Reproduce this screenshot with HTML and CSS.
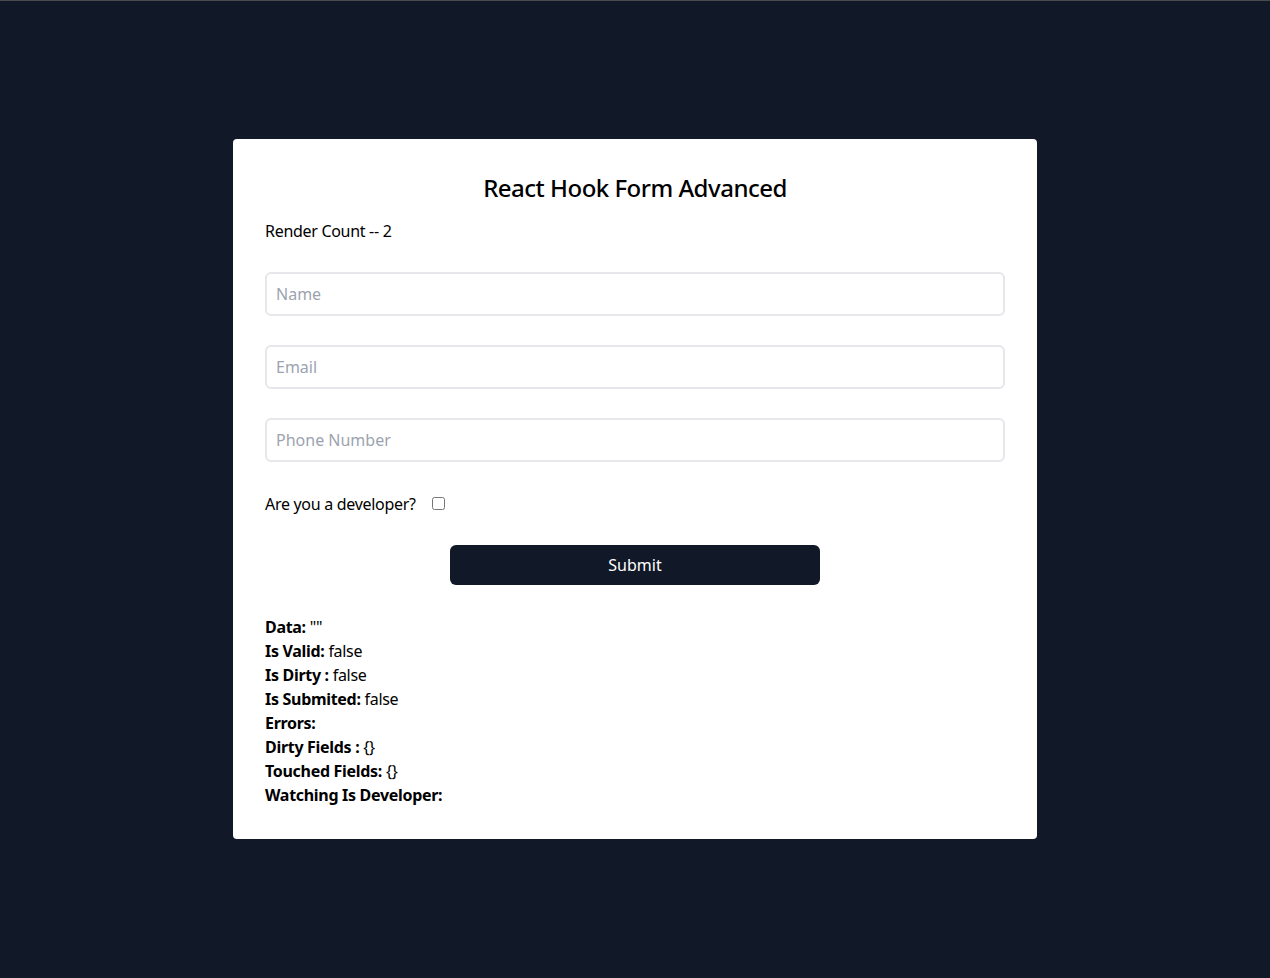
FILE: index.html
```html
<!DOCTYPE html>
<html lang="en">
<head>
<meta charset="utf-8">
<title>React Hook Form Advanced</title>
<link rel="stylesheet" href="styles.css">
</head>
<body>
<div class="topline"></div>
<main class="page">
  <section class="card">
    <h1 class="title">React Hook Form Advanced</h1>
    <p class="render">Render Count -- 2</p>
    <form class="form">
      <input class="field" type="text" placeholder="Name">
      <input class="field" type="text" placeholder="Email">
      <input class="field" type="text" placeholder="Phone Number">
      <label class="check-row">Are you a developer? <input class="check" type="checkbox"></label>
      <div class="btn-row"><button class="submit" type="button">Submit</button></div>
    </form>
    <div class="info">
      <div><b>Data:</b> ""</div>
      <div><b>Is Valid:</b> false</div>
      <div><b>Is Dirty :</b> false</div>
      <div><b>Is Submited:</b> false</div>
      <div><b>Errors:</b></div>
      <div><b>Dirty Fields :</b> {}</div>
      <div><b>Touched Fields:</b> {}</div>
      <div><b>Watching Is Developer:</b></div>
    </div>
  </section>
</main>
</body>
</html>
```
FILE: styles.css
```css
* { box-sizing: border-box; }
html, body { margin: 0; padding: 0; }
body {
  background: #111827;
  font-family: "Noto Sans", "Open Sans", sans-serif;
  color: #000;
  min-height: 978px;
  letter-spacing: -0.3px;
}
.topline { height: 1px; background: #4b4b4f; }
.page {
  display: flex;
  justify-content: center;
  padding-top: 138px;
}
.card {
  width: 804px;
  background: #fff;
  border-radius: 4px;
  padding: 32px;
}
.title {
  margin: 0;
  text-align: center;
  font-size: 24px;
  line-height: 32px;
  font-weight: 500;
  padding-top: 1px;
  letter-spacing: -0.5px;
}
.render {
  margin: 15px 0 0;
  font-size: 16px;
  line-height: 24px;
}
.form {
  display: flex;
  flex-direction: column;
  margin-top: 29px;
}
.field {
  height: 44px;
  border: 2px solid #e5e7eb;
  border-radius: 6px;
  padding: 0 9px;
  font: inherit;
  font-size: 16px;
  margin-bottom: 29px;
  outline: none;
}
.field::placeholder { color: #9ca3af; }
.check-row {
  display: flex;
  align-items: center;
  gap: 16px;
  font-size: 16px;
  line-height: 24px;
  margin-top: 1px;
}
.check {
  width: 13px;
  height: 13px;
  margin: 0;
  position: relative;
  top: -1px;
}
.btn-row {
  display: flex;
  justify-content: center;
  margin-top: 29px;
}
.submit {
  width: 370px;
  height: 40px;
  background: #111827;
  color: #fff;
  border: none;
  border-radius: 6px;
  font: inherit;
  font-size: 16px;
}
.info {
  margin-top: 30px;
  font-size: 16px;
  line-height: 24px;
}
.info b { font-weight: 700; }
```
